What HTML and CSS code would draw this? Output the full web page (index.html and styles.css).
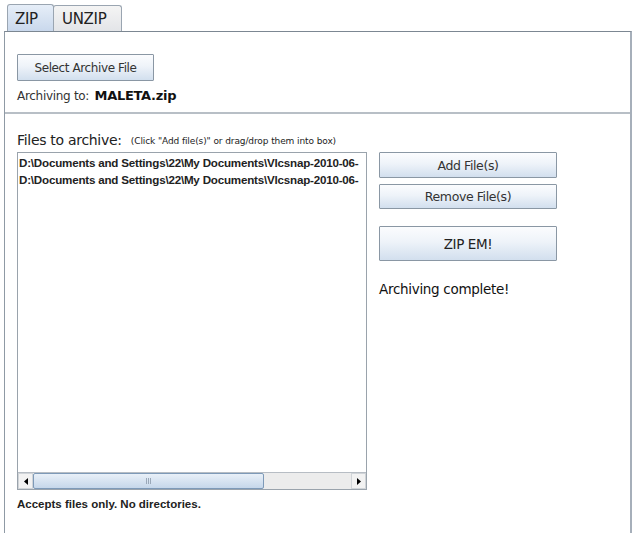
FILE: index.html
```html
<!DOCTYPE html>
<html>
<head>
<meta charset="utf-8">
<link rel="stylesheet" href="styles.css">
</head>
<body>
<div class="tabs">
  <div class="tab active">ZIP</div>
  <div class="tab">UNZIP</div>
</div>
<div class="panel">
  <div class="top">
    <button class="btn select">Select Archive File</button>
    <div class="target">Archiving to: <b>MALETA.zip</b></div>
  </div>
  <div class="bottom">
    <div class="heading">Files to archive: <span class="hint">(Click "Add file(s)" or drag/drop them into box)</span></div>
    <div class="work">
      <div class="listcol">
        <div class="list">
          <div class="items">
            <div class="item">D:\Documents and Settings\22\My Documents\Vlcsnap-2010-06-</div>
            <div class="item">D:\Documents and Settings\22\My Documents\Vlcsnap-2010-06-</div>
          </div>
          <div class="hscroll">
            <div class="arrow"><svg width="4" height="7" viewBox="0 0 4 7"><path d="M4 0L0 3.5L4 7Z" fill="#000"/></svg></div>
            <div class="track">
              <div class="thumb"><span class="grip"></span></div>
            </div>
            <div class="arrow"><svg width="4" height="7" viewBox="0 0 4 7"><path d="M0 0L4 3.5L0 7Z" fill="#000"/></svg></div>
          </div>
        </div>
        <div class="note">Accepts files only. No directories.</div>
      </div>
      <div class="actions">
        <button class="btn wide">Add File(s)</button>
        <button class="btn wide">Remove File(s)</button>
        <button class="btn wide big">ZIP EM!</button>
        <div class="status">Archiving complete!</div>
      </div>
    </div>
  </div>
</div>
</body>
</html>
```
FILE: styles.css
```css
html, body { margin: 0; padding: 0; background: #fff; }
body { font-family: "DejaVu Sans", Verdana, sans-serif; color: #222; width: 640px; height: 533px; overflow: hidden; }

.tabs { display: flex; align-items: flex-end; padding: 0 0 0 7px; height: 31px; box-sizing: border-box; }
.tab {
  font-size: 15px; letter-spacing: -0.3px; color: #222;
  box-sizing: border-box; height: 26px; padding: 4px 9px 0 8px;
  border: 1px solid #9aa5b1; border-bottom: none; border-radius: 3px 3px 0 0;
  background: linear-gradient(#f4f4f4, #e3e5e8);
}
.tab.active { background: linear-gradient(#e6eef8, #c9d8ec); width: 47px; height: 27px; padding: 5px 0 0 7px; }
.tab + .tab { margin-left: -1px; width: 69px; }

.panel {
  margin-left: 4px; width: 628px; height: 520px; box-sizing: border-box;
  border: 1px solid #8f9aa5; border-right: 2px solid #a6afba; border-top-color: #7c8792;
}
.top { padding: 22px 0 0 12px; height: 58px; border-bottom: 2px solid #b8bfc6; }
.btn {
  font-family: "DejaVu Sans", Verdana, sans-serif; color: #333;
  font-size: 12px; letter-spacing: -0.4px;
  border: 1px solid #8a97a4; border-radius: 1px;
  background: linear-gradient(#fbfcfe 0%, #eef3f9 45%, #d2dfee 100%);
  padding: 0; margin: 0; cursor: default;
}
.select { width: 137px; height: 27px; }
.target { font-size: 12px; letter-spacing: -0.3px; margin-top: 7px; color: #333; }
.target b { font-weight: bold; font-size: 13px; color: #111; margin-left: 2px; }

.bottom { padding: 18px 0 0 12px; }
.heading { font-size: 14px; letter-spacing: -0.3px; color: #222; height: 20px; white-space: nowrap; }
.hint { font-size: 9px; letter-spacing: -0.1px; margin-left: 5px; position: relative; top: -1px; }

.work { display: flex; }
.listcol { width: 350px; }
.list {
  width: 350px; height: 338px; box-sizing: border-box;
  border: 1px solid #9aa3ac; display: flex; flex-direction: column;
}
.items { flex: 1; padding: 1px 0 0 1px; overflow: hidden; }
.item {
  font-family: "Liberation Sans", Arial, sans-serif; font-weight: bold;
  font-size: 11.6px; letter-spacing: -0.2px; white-space: nowrap; line-height: 17px; color: #222;
}
.hscroll { height: 16px; display: flex; border-top: 1px solid #b7bdc4; background: #efefef; }
.arrow { width: 15px; display: flex; align-items: center; justify-content: center; background: #f2f2f2; border: 1px solid #d0d4d8; box-sizing: border-box; }
.track { flex: 1; background: #ececec; }
.thumb {
  width: 231px; height: 100%; box-sizing: border-box;
  border: 1px solid #7e9ab8; border-radius: 2px;
  background: linear-gradient(#e9f0f8, #c6d7ea);
  display: flex; align-items: center; justify-content: center;
}
.grip { width: 5px; height: 6px; border-left: 1px solid #9aa8b8; border-right: 1px solid #9aa8b8; position: relative; box-sizing: border-box; }
.grip::after { content: ""; position: absolute; left: 1px; top: 0; width: 1px; height: 6px; background: #9aa8b8; }
.note {
  font-family: "Liberation Sans", Arial, sans-serif; font-weight: bold;
  font-size: 11.5px; margin-top: 8px; color: #222;
}

.actions { margin-left: 12px; display: flex; flex-direction: column; width: 178px; }
.wide { width: 178px; height: 26px; font-size: 12.5px; }
.wide + .wide { margin-top: 6px; height: 25px; }
.big { margin-top: 17px !important; height: 35px !important; font-size: 13.5px; color: #222; }
.status { font-size: 13.5px; letter-spacing: -0.3px; margin-top: 20px; color: #111; }
```
